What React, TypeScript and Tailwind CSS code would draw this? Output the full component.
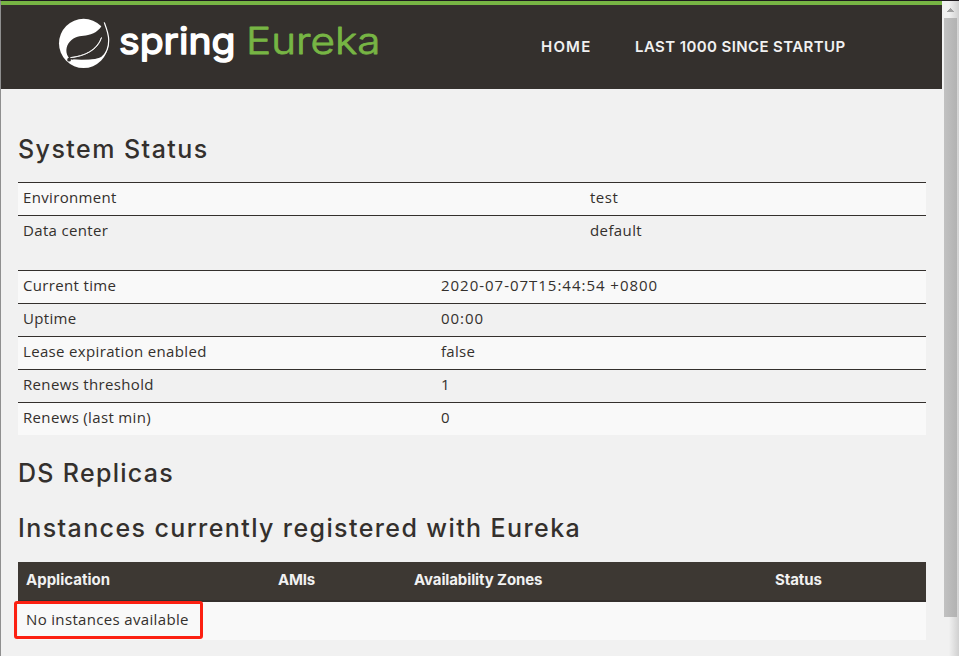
const environment = [
  { label: 'Environment', value: 'test', tracking: 'tracking-[0.5px]' },
  { label: 'Data center', value: 'default', tracking: 'tracking-[0.4px]' },
]

const general = [
  { label: 'Current time', value: '2020-07-07T15:44:54 +0800', tracking: 'tracking-[0.98px]' },
  { label: 'Uptime', value: '00:00', tracking: 'tracking-[0.98px]' },
  { label: 'Lease expiration enabled', value: 'false', tracking: 'tracking-[0.3px]' },
  { label: 'Renews threshold', value: '1', tracking: 'tracking-[0.3px]' },
  { label: 'Renews (last min)', value: '0', tracking: 'tracking-[0.3px]' },
]

function Logo() {
  return (
    <svg width="330" height="60" viewBox="54 14 330 60" className="block" aria-label="Spring Eureka">
      <circle cx="83.6" cy="43.4" r="24.6" fill="#fff" />
      {/* leaf cut out of the disc */}
      <path
        d="M104.3 21.5C101 28.5 96 33.5 88 35C82 36.2 77 35.6 71.5 40C66.5 44 64.8 51 68 56.5C69 58.5 71 60 74 59.6C86 60 96 60.4 101.5 57.3C106.5 53.5 109.2 45 108.9 39C108.5 32 106 27 104.3 21.5Z"
        fill="#34302d"
      />
      <path
        d="M104.2 22.4C106.3 28 108.6 33.5 108.7 40C108.8 47 106.5 53.5 101.5 57.5C95 61.4 83 60.6 73 60.3"
        fill="none"
        stroke="#fff"
        strokeWidth="1.2"
      />
      <path d="M101.5 37.5C98.5 47.5 90 55 70.5 57.6C84 56.6 97 50 101.5 37.5Z" fill="#fff" stroke="#fff" strokeWidth=".8" />
      <circle cx="69.1" cy="59.7" r="1.9" fill="#34302d" />
      <text
        x="119"
        y="54"
        textLength="116.5"
        lengthAdjust="spacingAndGlyphs"
        fill="#fff"
        stroke="#fff"
        strokeWidth="1.5"
        strokeLinejoin="round"
        className="font-['Inter',sans-serif] text-[37px] font-normal"
      >
        spring
      </text>
      <text
        x="246"
        y="54.2"
        textLength="134.5"
        lengthAdjust="spacingAndGlyphs"
        fill="#77b544"
        stroke="#77b544"
        strokeWidth=".8"
        strokeLinejoin="round"
        className="font-['Inter',sans-serif] text-[37px] font-light"
      >
        Eureka
      </text>
    </svg>
  )
}

function Header() {
  return (
    <header className="flex h-[88px] items-start border-t-[4px] border-[#77b544] bg-[#34302d] pl-[53px] pt-[9px]">
      <Logo />
      <nav className="flex pl-[157px] pt-[23px] text-[15px] leading-5 font-semibold text-[#f1f1f1]">
        <a className="w-[94px] tracking-[1.2px]">HOME</a>
        <a className="tracking-[0.4px]">LAST 1000 SINCE STARTUP</a>
      </nav>
    </header>
  )
}

function Row({ label, value, tracking, cols }: { label: string; value: string; tracking: string; cols: string }) {
  return (
    <div className={`grid h-[33px] border-t border-[#34302d] px-[5px] pt-1 leading-5 odd:bg-[#f9f9f9] ${cols}`}>
      <span className="tracking-[0.34px]">{label}</span>
      <span className={tracking}>{value}</span>
    </div>
  )
}

function Scrollbar() {
  return (
    <div className="flex w-[17px] flex-col bg-linear-to-r from-[#f1f1f1] from-40% to-[#d0d0d0]">
      <div className="flex h-[17px] items-center justify-center">
        <svg width="7" height="4" viewBox="0 0 7 4" className="block">
          <path d="M3 0h1v1h1v1h1v1h1v1H0V3h1V2h1V1h1z" fill="#a0a0a0" />
        </svg>
      </div>
      <div className="ml-[2px] h-[599px] w-[13px] bg-linear-to-r from-[#c1c1c1] to-[#b2b2b2]" />
    </div>
  )
}

function App() {
  return (
    <div className="flex h-[656px] overflow-hidden border-t border-l border-t-[#1f1b1f] border-l-[#8f8f8f] bg-[#f1f1f1] font-['Inter',sans-serif] text-[#34302d]">
      <div className="flex w-[941px] flex-col">
        <Header />
        <main className="flex flex-col pl-[17px] pr-4 pt-[42px]">
          <h1 className="h-[51px] text-[25px] leading-9 font-medium tracking-[1.45px]">System Status</h1>
          <section className="font-['Open_Sans',sans-serif] text-[15px]">
            {environment.map((row) => (
              <Row key={row.label} {...row} cols="grid-cols-[567px_1fr]" />
            ))}
          </section>
          <section className="mt-[22px] font-['Open_Sans',sans-serif] text-[15px]">
            {general.map((row) => (
              <Row key={row.label} {...row} cols="grid-cols-[418px_1fr]" />
            ))}
          </section>
          <h1 className="mt-5 text-[25px] leading-9 font-medium tracking-[1.3px]">DS Replicas</h1>
          <h1 className="mt-[19px] text-[25px] leading-9 font-medium tracking-[1.4px]">
            Instances currently registered with Eureka
          </h1>
          <section className="mt-4 text-[15px]">
            <div className="grid h-10 grid-cols-[252px_136px_361px_1fr] border-b-2 border-[#34302d] bg-[#3d3833] pl-2 pt-2 leading-5 font-bold text-[#f1f1f1]">
              <span>Application</span>
              <span className="tracking-[-0.2px]">AMIs</span>
              <span className="tracking-[-0.12px]">Availability Zones</span>
              <span className="tracking-[-0.09px]">Status</span>
            </div>
            <div className="relative h-[38px] bg-[#f9f9f9] pl-2 pt-[7px] font-['Open_Sans',sans-serif] leading-5 tracking-[0.34px]">
              No instances available
              <div className="absolute -left-1 -top-[1px] h-[38px] w-[189px] rounded-[3px] border-[3px] border-[#fc2012]" />
            </div>
          </section>
        </main>
      </div>
      <Scrollbar />
    </div>
  )
}

export default App
